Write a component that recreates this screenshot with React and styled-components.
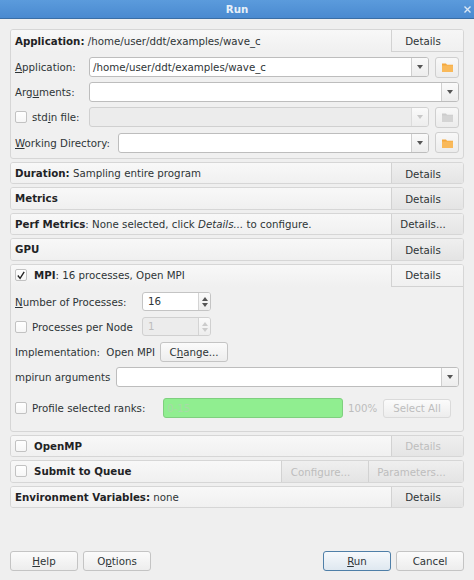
import React from 'react'
import styled, { createGlobalStyle } from 'styled-components'

const Global = createGlobalStyle`
  html, body { margin: 0; padding: 0; background: #efefef; }
  body { font-family: "DejaVu Sans", sans-serif; font-size: 10.25px; color: #2e3436; }
  * { box-sizing: border-box; }
`

const Window = styled.div`
  width: 474px;
  height: 580px;
  display: flex;
  flex-direction: column;
  background: #efefef;
  overflow: hidden;
`

const TitleBar = styled.div`
  height: 19px;
  flex: none;
  display: flex;
  align-items: center;
  justify-content: center;
  position: relative;
  background: linear-gradient(#5b9bdc, #4a8ad0);
  border-bottom: 1px solid #3a6ea5;
  color: #e8f0f8;
  font-weight: bold;
`

const Close = styled.span`
  position: absolute;
  right: 0;
  top: 3px;
  display: flex;
`

const Body = styled.div`
  flex: 1;
  display: flex;
  flex-direction: column;
  padding: 10px 10px 9px;
`

const Panels = styled.div`
  flex: 1;
  display: flex;
  flex-direction: column;
  gap: 3px;
`

const Panel = styled.section`
  border: 1px solid #d6d6d6;
  border-radius: 3px;
  background: #f0f0f0;
  height: ${p => p.$h}px;
  flex: none;
  overflow: hidden;
`

const Header = styled.div`
  display: flex;
  align-items: stretch;
  height: ${p => p.$h}px;
  background: linear-gradient(#f8f8f8, #f0f0f0);
`

const HeaderText = styled.div`
  flex: 1;
  display: flex;
  align-items: center;
  gap: 7px;
  padding-left: 4px;
  padding-bottom: 1px;
  white-space: pre;

  b { font-weight: bold; color: #1f2325; }
  i { font-style: oblique; }
`

const DetailsButton = styled.div`
  width: 72px;
  flex: none;
  display: flex;
  align-items: center;
  justify-content: center;
  padding-right: 9px;
  border-left: 1px solid #d2d2d2;
  background: ${p => p.$open ? 'linear-gradient(#f6f6f6, #f0f0f0)' : 'linear-gradient(#efefef, #e4e4e4)'};
  border-bottom: ${p => p.$open ? '1px solid #d2d2d2' : 'none'};
  color: ${p => p.$off ? '#bdbdbd' : '#2e3436'};
`

const HeaderButton = styled(DetailsButton)`
  width: ${p => p.$w}px;
`

const Check = styled.span`
  width: 12px;
  height: 12px;
  flex: none;
  border: 1px solid #c2c2c2;
  border-radius: 2px;
  background: linear-gradient(#ffffff, #f6f6f6);
  display: inline-flex;
  align-items: center;
  justify-content: center;
`

const Form = styled.div`
  display: flex;
  flex-direction: column;
  padding: ${p => p.$top}px 4px 0;
  gap: 5.2px;
`

const Row = styled.div`
  display: flex;
  align-items: center;
  gap: ${p => p.$gap || 3}px;
  height: 20px;
  margin-top: ${p => p.$top || 0}px;
  white-space: pre;
`

const Label = styled.span`
  width: ${p => p.$w}px;
  flex: none;
  display: flex;
  align-items: center;
  gap: 5px;

  u { text-underline-offset: 1px; }
`

const Combo = styled.div`
  flex: 1;
  display: flex;
  height: 20px;
  border: 1px solid ${p => p.$off ? '#d0d0d0' : '#bdbdbd'};
  border-radius: 3px;
  background: ${p => p.$off ? '#ececec' : '#ffffff'};
  overflow: hidden;
`

const ComboText = styled.div`
  flex: 1;
  padding-left: 3px;
  line-height: 18px;
`

const Arrow = styled.div`
  width: 17px;
  border-left: 1px solid ${p => p.$off ? '#dcdcdc' : '#cfcfcf'};
  background: linear-gradient(#fafafa, #ededed);
  display: flex;
  align-items: center;
  justify-content: center;

  &::after {
    content: "";
    border-left: 3px solid transparent;
    border-right: 3px solid transparent;
    border-top: 4px solid ${p => p.$off ? '#c8c8c8' : '#555'};
  }
`

const IconButton = styled.div`
  width: 24px;
  height: 21px;
  flex: none;
  margin-left: 3px;
  border: 1px solid #cfcfcf;
  border-radius: 3px;
  background: linear-gradient(#f8f8f8, #ececec);
  display: flex;
  align-items: center;
  justify-content: center;
`

const Spin = styled.div`
  width: 69px;
  height: 19px;
  display: flex;
  border: 1px solid ${p => p.$off ? '#d0d0d0' : '#c4c4c4'};
  border-radius: 3px;
  background: ${p => p.$off ? '#ececec' : '#ffffff'};
  color: ${p => p.$off ? '#bdbdbd' : 'inherit'};
  overflow: hidden;
`

const SpinText = styled.div`
  flex: 1;
  padding-left: 5px;
  line-height: 17px;
`

const SpinArrows = styled.div`
  width: 12px;
  border-left: 1px solid #d4d4d4;
  background: linear-gradient(#fafafa, #ededed);
  display: flex;
  flex-direction: column;
  align-items: center;
  justify-content: center;
  gap: 2px;

  &::before, &::after {
    content: "";
    border-left: 3px solid transparent;
    border-right: 3px solid transparent;
  }
  &::before { border-bottom: 4px solid ${p => p.$off ? '#cccccc' : '#555'}; }
  &::after { border-top: 4px solid ${p => p.$off ? '#cccccc' : '#555'}; }
`

const Button = styled.div`
  height: ${p => p.$h || 20}px;
  width: 68px;
  flex: none;
  display: flex;
  align-items: center;
  justify-content: center;
  border: 1px solid ${p => p.$default ? '#4f7fa8' : p.$off ? '#dadada' : '#c4c4c4'};
  border-radius: 3px;
  background: ${p => p.$default ? 'linear-gradient(#f6f9fc, #dfe8f0)' : 'linear-gradient(#fbfbfb, #ededed)'};
  color: ${p => p.$off ? '#bdbdbd' : '#2e3436'};
  margin-left: ${p => p.$left || 0}px;
`

const Progress = styled.div`
  width: 180px;
  height: 20px;
  flex: none;
  border: 1px solid #7fcf7f;
  border-radius: 3px;
  background: #90ee90;
  color: #a6dba6;
  line-height: 18px;
  padding-left: 3px;
`

const Muted = styled.span`
  width: 29px;
  flex: none;
  color: #bdbdbd;
`

const Footer = styled.div`
  display: flex;
  align-items: center;
  height: 20px;
  flex: none;
  gap: 5px;
`

const Spacer = styled.div`
  flex: 1;
`

const Folder = ({ off }) => (
  <svg width="11" height="10" viewBox="0 0 11 10">
    <path d="M0 1.5h4l1 1.2h6V10H0z" fill={off ? '#cccccc' : '#f5a83c'} />
    <path d="M0 3.4h11V10H0z" fill={off ? '#d4d4d4' : '#f9b95a'} />
  </svg>
)

const Tick = () => (
  <svg width="11" height="11" viewBox="0 0 11 11">
    <path d="M2 5.5l2.5 3.2L9 1.5" fill="none" stroke="#222" strokeWidth="1.5" />
  </svg>
)

const Collapsed = ({ children, off, label = 'Details' }) => (
  <Panel $h={22.4}>
    <Header $h={21}>
      <HeaderText>{children}</HeaderText>
      <DetailsButton $off={off}>{label}</DetailsButton>
    </Header>
  </Panel>
)

export default function App() {
  return (
    <Window>
      <Global />
      <TitleBar>
        Run
        <Close>
          <svg width="13" height="13" viewBox="0 0 13 13">
            <path d="M3.5 3.5l6 6M9.5 3.5l-6 6" stroke="#dbe8f5" strokeWidth="1.4" />
          </svg>
        </Close>
      </TitleBar>
      <Body>
        <Panels>
          <Panel $h={130}>
            <Header $h={22}>
              <HeaderText><span><b>Application:</b> /home/user/ddt/examples/wave_c</span></HeaderText>
              <DetailsButton $open>Details</DetailsButton>
            </Header>
            <Form $top={5}>
              <Row>
                <Label $w={71}><span><u>A</u>pplication:</span></Label>
                <Combo><ComboText>/home/user/ddt/examples/wave_c</ComboText><Arrow /></Combo>
                <IconButton><Folder /></IconButton>
              </Row>
              <Row>
                <Label $w={71}><span>Arg<u>u</u>ments:</span></Label>
                <Combo><ComboText /><Arrow /></Combo>
              </Row>
              <Row>
                <Label $w={71}><Check /><span>std<u>i</u>n file:</span></Label>
                <Combo $off><ComboText /><Arrow $off /></Combo>
                <IconButton><Folder off /></IconButton>
              </Row>
              <Row>
                <Label $w={100}><span><u>W</u>orking Directory:</span></Label>
                <Combo><ComboText /><Arrow /></Combo>
                <IconButton><Folder /></IconButton>
              </Row>
            </Form>
          </Panel>
          <Collapsed><span><b>Duration:</b> Sampling entire program</span></Collapsed>
          <Collapsed><b>Metrics</b></Collapsed>
          <Collapsed label="Details...">
            <span><b>Perf Metrics</b>: None selected, click <i>Details...</i> to configure.</span>
          </Collapsed>
          <Collapsed><b>GPU</b></Collapsed>
          <Panel $h={168.2}>
            <Header $h={22}>
              <HeaderText><Check><Tick /></Check><span><b>MPI</b>: 16 processes, Open MPI</span></HeaderText>
              <DetailsButton $open>Details</DetailsButton>
            </Header>
            <Form $top={5}>
              <Row>
                <Label $w={124}><span><u>N</u>umber of Processes:</span></Label>
                <Spin><SpinText>16</SpinText><SpinArrows /></Spin>
              </Row>
              <Row>
                <Label $w={124}><Check /><span>Processes per Node</span></Label>
                <Spin $off><SpinText>1</SpinText><SpinArrows $off /></Spin>
              </Row>
              <Row $gap={5}>
                <span>Implementation:  Open MPI</span>
                <Button><span>C<u>h</u>ange...</span></Button>
              </Row>
              <Row>
                <Label $w={98}>mpirun arguments</Label>
                <Combo><ComboText /><Arrow /></Combo>
              </Row>
              <Row $gap={5} $top={6}>
                <Label $w={143}><Check /><span>Profile selected ranks:</span></Label>
                <Progress>0-15</Progress>
                <Muted>100%</Muted>
                <Button $off $h={19} $left={1}>Select All</Button>
              </Row>
            </Form>
          </Panel>
          <Collapsed off><Check /><b>OpenMP</b></Collapsed>
          <Panel $h={22.4}>
            <Header $h={21}>
              <HeaderText><Check /><b>Submit to Queue</b></HeaderText>
              <HeaderButton $off $w={87}>Configure...</HeaderButton>
              <HeaderButton $off $w={95}>Parameters...</HeaderButton>
            </Header>
          </Panel>
          <Collapsed><span><b>Environment Variables:</b> none</span></Collapsed>
        </Panels>
        <Footer>
          <Button><span><u>H</u>elp</span></Button>
          <Button><span>O<u>p</u>tions</span></Button>
          <Spacer />
          <Button $default><span><u>R</u>un</span></Button>
          <Button>Cancel</Button>
        </Footer>
      </Body>
    </Window>
  )
}
